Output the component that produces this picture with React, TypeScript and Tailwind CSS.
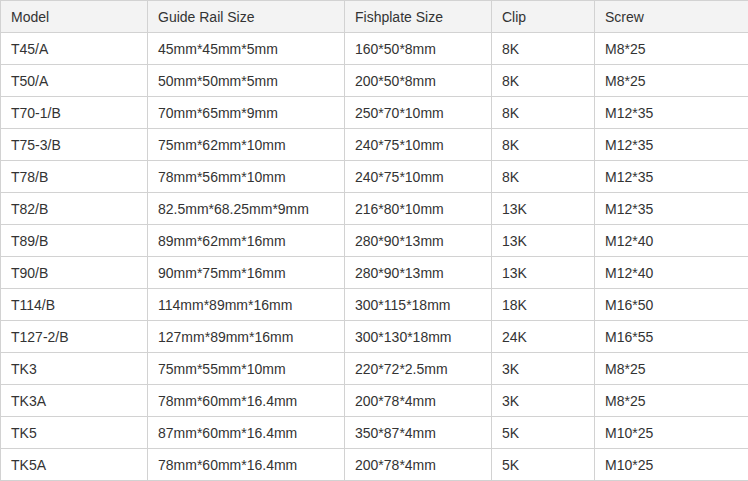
const headers = ["Model", "Guide Rail Size", "Fishplate Size", "Clip", "Screw"];

const rows: string[][] = [
  ["T45/A", "45mm*45mm*5mm", "160*50*8mm", "8K", "M8*25"],
  ["T50/A", "50mm*50mm*5mm", "200*50*8mm", "8K", "M8*25"],
  ["T70-1/B", "70mm*65mm*9mm", "250*70*10mm", "8K", "M12*35"],
  ["T75-3/B", "75mm*62mm*10mm", "240*75*10mm", "8K", "M12*35"],
  ["T78/B", "78mm*56mm*10mm", "240*75*10mm", "8K", "M12*35"],
  ["T82/B", "82.5mm*68.25mm*9mm", "216*80*10mm", "13K", "M12*35"],
  ["T89/B", "89mm*62mm*16mm", "280*90*13mm", "13K", "M12*40"],
  ["T90/B", "90mm*75mm*16mm", "280*90*13mm", "13K", "M12*40"],
  ["T114/B", "114mm*89mm*16mm", "300*115*18mm", "18K", "M16*50"],
  ["T127-2/B", "127mm*89mm*16mm", "300*130*18mm", "24K", "M16*55"],
  ["TK3", "75mm*55mm*10mm", "220*72*2.5mm", "3K", "M8*25"],
  ["TK3A", "78mm*60mm*16.4mm", "200*78*4mm", "3K", "M8*25"],
  ["TK5", "87mm*60mm*16.4mm", "350*87*4mm", "5K", "M10*25"],
  ["TK5A", "78mm*60mm*16.4mm", "200*78*4mm", "5K", "M10*25"],
];

const cell = "h-[32px] border border-[#d2d2d2] px-[10px] py-0 text-left align-middle font-normal whitespace-nowrap";

export default function App() {
  return (
    <div className="h-[481px] w-[748px] overflow-hidden bg-white">
      <table
        className="w-[800px] table-fixed border-collapse text-[14px] leading-[16px] text-[#333333]"
        style={{ fontFamily: '"Liberation Sans", Arial, sans-serif' }}
      >
        <colgroup>
          <col className="w-[147px]" />
          <col className="w-[197px]" />
          <col className="w-[147px]" />
          <col className="w-[103px]" />
          <col className="w-[206px]" />
        </colgroup>
        <thead>
          <tr className="bg-[#f3f3f3]">
            {headers.map((h) => (
              <th key={h} className={cell}>
                {h}
              </th>
            ))}
          </tr>
        </thead>
        <tbody>
          {rows.map((r) => (
            <tr key={r[0]}>
              {r.map((v, i) => (
                <td key={i} className={cell}>
                  {v}
                </td>
              ))}
            </tr>
          ))}
        </tbody>
      </table>
    </div>
  );
}
